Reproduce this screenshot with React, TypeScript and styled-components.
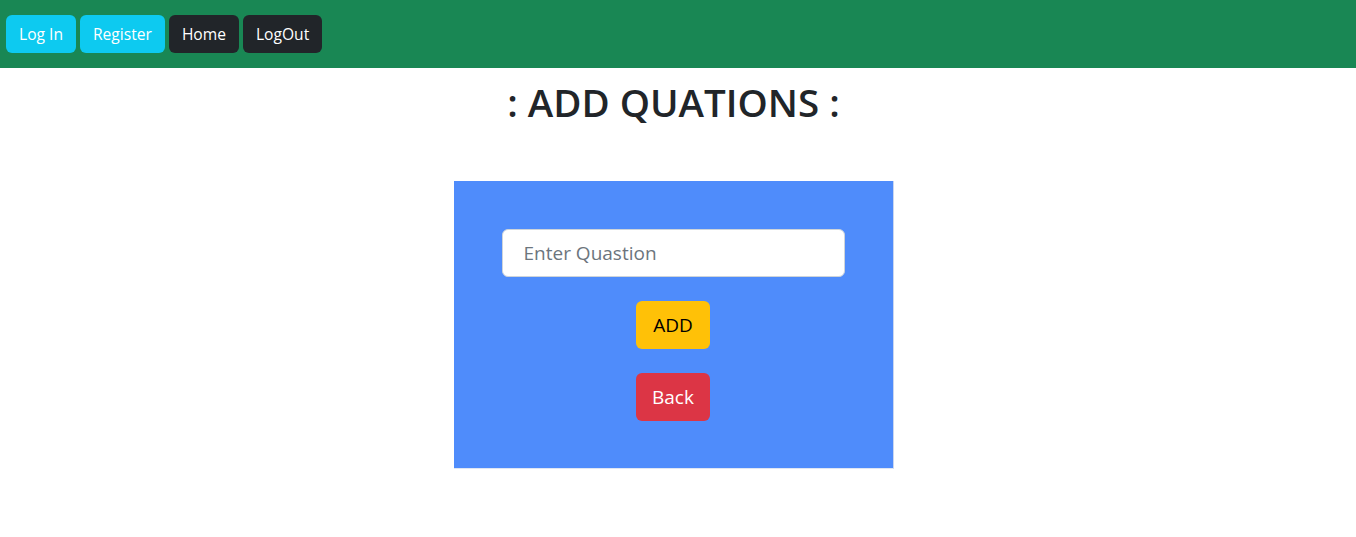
import React, { useState } from "react";
import styled, { createGlobalStyle } from "styled-components";

const GlobalStyle = createGlobalStyle`
  html, body {
    margin: 0;
    padding: 0;
    background: #fff;
    font-family: "Open Sans", "Noto Sans", "Liberation Sans", sans-serif;
    color: #212529;
  }
  * {
    box-sizing: border-box;
  }
`;

const NavBar = styled.nav`
  display: flex;
  align-items: center;
  gap: 4px;
  height: 68px;
  padding: 0 6px;
  background: #198754;
`;

const NavButton = styled.button<{ $variant: "info" | "dark" }>`
  height: 38px;
  padding: 0 13px;
  border: none;
  border-radius: 6px;
  font-family: inherit;
  font-size: 15.6px;
  color: #fff;
  cursor: pointer;
  background: ${(p) => (p.$variant === "info" ? "#0dcaf0" : "#212529")};
`;

const Main = styled.main`
  display: flex;
  flex-direction: column;
  align-items: center;
  padding-right: 9px;
`;

const Title = styled.h1`
  margin: 10px 0 55px;
  font-size: 38.5px;
  font-weight: 600;
  line-height: 48px;
  color: #212529;
`;

const Card = styled.div`
  display: flex;
  flex-direction: column;
  align-items: center;
  gap: 24px;
  width: 440px;
  padding: 48px 48px 47px 48px;
  background: #4f8cfb;
  border-right: 1px solid #c9d6f0;
  border-bottom: 1px solid #dfe6f3;
`;

const QuestionInput = styled.input`
  width: 343px;
  height: 48px;
  padding: 8px 21px;
  border: 1px solid #ced4da;
  border-radius: 6px;
  font-family: inherit;
  font-size: 19px;
  color: #212529;
  outline: none;
  &::placeholder {
    color: #6c757d;
  }
`;

const ActionButton = styled.button<{ $variant: "warning" | "danger" }>`
  width: 74px;
  height: 48px;
  border: none;
  border-radius: 6px;
  font-family: inherit;
  font-size: 19px;
  cursor: pointer;
  color: ${(p) => (p.$variant === "warning" ? "#000" : "#fff")};
  background: ${(p) => (p.$variant === "warning" ? "#ffc107" : "#dc3545")};
`;

const App: React.FC = () => {
  const [question, setQuestion] = useState("");

  return (
    <>
      <GlobalStyle />
      <NavBar>
        <NavButton $variant="info">Log In</NavButton>
        <NavButton $variant="info">Register</NavButton>
        <NavButton $variant="dark">Home</NavButton>
        <NavButton $variant="dark">LogOut</NavButton>
      </NavBar>
      <Main>
        <Title>: ADD QUATIONS :</Title>
        <Card>
          <QuestionInput
            placeholder="Enter Quastion"
            value={question}
            onChange={(e) => setQuestion(e.target.value)}
          />
          <ActionButton $variant="warning">ADD</ActionButton>
          <ActionButton $variant="danger">Back</ActionButton>
        </Card>
      </Main>
    </>
  );
};

export default App;
